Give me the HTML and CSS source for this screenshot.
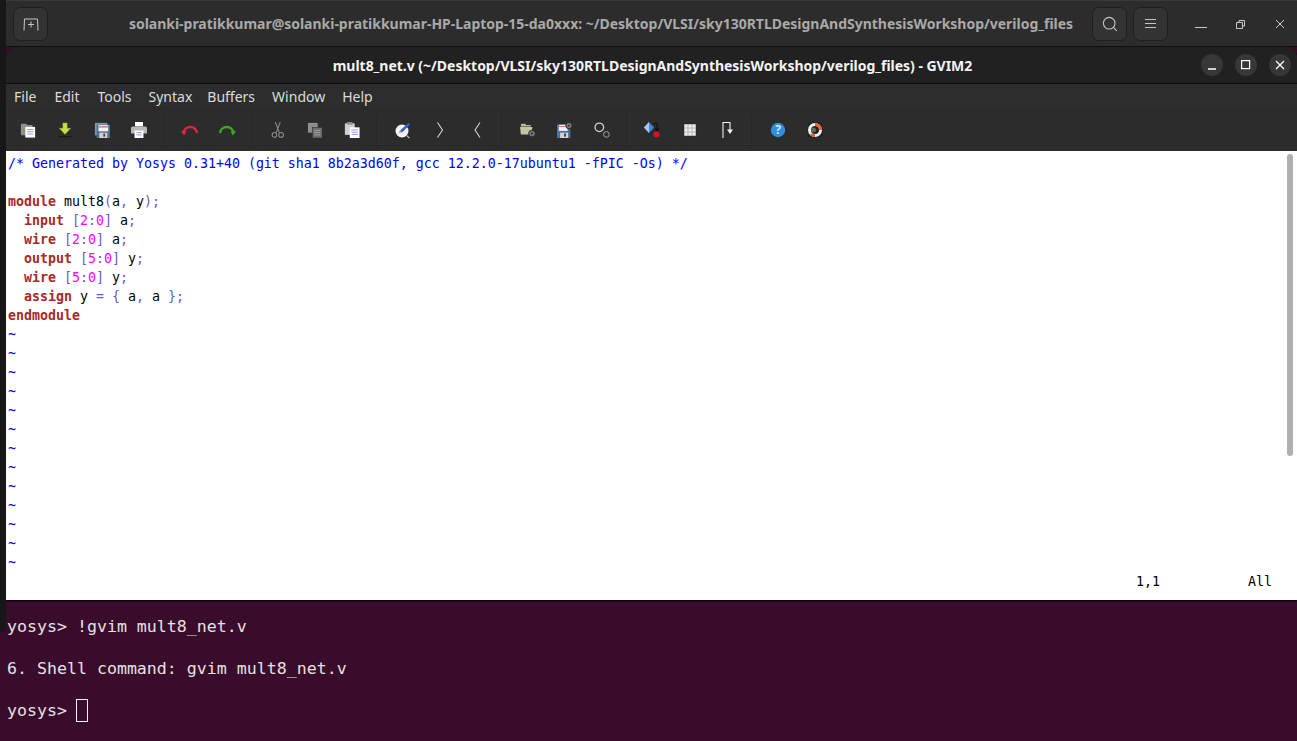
FILE: index.html
```html
<!DOCTYPE html>
<html lang="en">
<head>
<meta charset="utf-8">
<title>mult8_net.v - GVIM2</title>
<link rel="stylesheet" href="styles.css">
</head>
<body>
<div class="desktop">
  <div class="edge"></div>
  <header class="term-head">
    <button class="hbtn newtab" aria-label="New tab"><svg width="16" height="16" viewBox="0 0 16 16" fill="none" stroke="#c8c8c8" stroke-width="1"><path d="M1 14.5 L1.5 3 H14.5 L15 14.5 M8 5.5 V11.5 M5 8.5 H11"/></svg></button>
    <div class="term-title">solanki-pratikkumar@solanki-pratikkumar-HP-Laptop-15-da0xxx: ~/Desktop/VLSI/sky130RTLDesignAndSynthesisWorkshop/verilog_files</div>
    <button class="hbtn" aria-label="Search"><svg width="16" height="16" viewBox="0 0 16 16" fill="none" stroke="#c4c4c4" stroke-width="1.1"><circle cx="7.2" cy="7.2" r="5.8"/><path d="M11.4 11.4 L14.8 14.8"/></svg></button>
    <button class="hbtn menu-btn" aria-label="Menu"><svg width="12" height="10" viewBox="0 0 12 10" stroke="#c4c4c4" stroke-width="1"><path d="M0 .5H11M0 4.5H11M0 8.5H11"/></svg></button>
    <div class="wctl">
      <svg width="12" height="10" viewBox="0 0 12 10" stroke="#c8c8c8" stroke-width="1"><path d="M0 8.5 H12"/></svg>
      <svg width="10" height="10" viewBox="0 0 10 10" fill="none" stroke="#c8c8c8" stroke-width="1"><path d="M.5 3.5 H6.5 V9.5 H.5 Z M3 3 V1.5 H8.5 V7 H7"/></svg>
      <svg width="10" height="10" viewBox="0 0 10 10" stroke="#c8c8c8" stroke-width="1"><path d="M1 1 L9 9 M9 1 L1 9"/></svg>
    </div>
  </header>

  <section class="gvim">
    <div class="g-title">
      <div class="g-title-text">mult8_net.v (~/Desktop/VLSI/sky130RTLDesignAndSynthesisWorkshop/verilog_files) - GVIM2</div>
      <div class="g-ctl">
        <span class="round"><svg width="10" height="10" viewBox="0 0 10 10" stroke="#fff" stroke-width="1.3"><path d="M1 9 H9"/></svg></span>
        <span class="round"><svg width="10" height="10" viewBox="0 0 10 10" fill="none" stroke="#fff" stroke-width="1.2"><rect x=".6" y=".6" width="8" height="8"/></svg></span>
        <span class="round"><svg width="10" height="10" viewBox="0 0 10 10" stroke="#fff" stroke-width="1.3"><path d="M1 1 L9 9 M9 1 L1 9"/></svg></span>
      </div>
    </div>
    <nav class="menubar">
      <span>File</span><span>Edit</span><span>Tools</span><span>Syntax</span><span>Buffers</span><span>Window</span><span>Help</span>
    </nav>
    <div class="toolbar">
      <span class="tool"><svg width="16" height="16" viewBox="0 0 18 18"><path d="M1 3 Q1 2 2 2 H7 L8 3.500 H14 V15 H2 Q1 15 1 14Z" fill="#8f8f8f"/><rect x="6" y="5.500" width="11" height="12" fill="#fff"/><path d="M8 8.500H15M8 11H15M8 13.500H15" stroke="#8a8ad8"/></svg></span>
      <span class="tool"><svg width="16" height="16" viewBox="0 0 18 18"><path d="M6.500 1H11.500V7H15.500L9 14 2.500 7H6.500Z" fill="#c4e04a" stroke="#7f9a20" stroke-width=".5"/><path d="M2 16.500H16" stroke="#111" stroke-width="1"/></svg></span>
      <span class="tool"><svg width="16" height="16" viewBox="0 0 18 18"><rect x="1" y="1" width="14" height="14" fill="#7a9ab2"/><rect x="3" y="3" width="15" height="15" fill="#4d6f8c"/><rect x="5" y="3.500" width="11" height="7" fill="#f2f2f2"/><path d="M5 5.500H16" stroke="#e06060" stroke-width="1.200"/><rect x="6" y="12" width="9" height="6" fill="#d0d0d0"/><rect x="10.500" y="13" width="2" height="3.500" fill="#444"/></svg></span>
      <span class="tool"><svg width="16" height="16" viewBox="0 0 18 18"><rect x="4.500" y="0" width="9" height="5" fill="#fff"/><path d="M0 7 Q0 5 2 5 H16 Q18 5 18 7 V13 H0Z" fill="#b8b8b8"/><rect x="4" y="9.500" width="10" height="8.500" fill="#fff"/><path d="M6 12H12M6 14.500H12" stroke="#8a8ad8"/></svg></span>
      <span class="sep"></span>
      <span class="tool"><svg width="18" height="18" viewBox="0 0 18 18" fill="none"><path d="M2.500 12 A6.800 6.800 0 0 1 16 12" stroke="#e0263f" stroke-width="2.400"/><path d="M0 10 L5.500 10.500 L3 14.500 Z" fill="#e0263f"/></svg></span>
      <span class="tool"><svg width="18" height="18" viewBox="0 0 18 18" fill="none"><path d="M2 12 A6.800 6.800 0 0 1 15.500 12" stroke="#3ca81e" stroke-width="2.400"/><path d="M18 10 L12.500 10.500 L15 14.500 Z" fill="#3ca81e"/></svg></span>
      <span class="sep"></span>
      <span class="tool"><svg width="16" height="16" viewBox="0 0 18 18" fill="none" stroke="#8a8a8a" stroke-width="1.200"><path d="M6 0 L10.500 12 M11.500 0 L7 12"/><circle cx="5" cy="14.500" r="2.600"/><circle cx="12.500" cy="14.500" r="2.600"/></svg></span>
      <span class="tool"><svg width="16" height="16" viewBox="0 0 18 18"><rect x="1" y="1" width="11" height="11" fill="#8d8d8d"/><rect x="6" y="6" width="11" height="12" fill="#6e6e6e" stroke="#2a2a2a" stroke-width=".6"/><path d="M8 9.500H15M8 12H15M8 14.500H15" stroke="#a5a5a5"/></svg></span>
      <span class="tool"><svg width="16" height="16" viewBox="0 0 18 18"><rect x="1" y="1.500" width="11" height="13" fill="#d0d0d0"/><rect x="3.500" y="0" width="6" height="3" fill="#909090"/><rect x="6.500" y="6" width="11" height="12" fill="#fff"/><path d="M8.500 9H15.500M8.500 11.500H15.500M8.500 14H15.500" stroke="#8a8ad8"/></svg></span>
      <span class="sep"></span>
      <span class="tool"><svg width="18" height="18" viewBox="0 0 18 18"><circle cx="8" cy="10" r="6.500" fill="#f4f4f4"/><path d="M14.500 2 L16 3.500 L8.500 11 L6 11.500 L6.500 9Z" fill="#2f63d8"/><path d="M5 12 L7 9" stroke="#e89a58" stroke-width="1.200"/><path d="M12.500 14.500 L15.500 17" stroke="#bbb" stroke-width="1.200"/></svg></span>
      <span class="tool"><svg width="18" height="18" viewBox="0 0 18 18" fill="none" stroke="#d4d4d4" stroke-width="1.100"><path d="M6.500 1.500 L11.500 9 L6.500 16.500"/></svg></span>
      <span class="tool"><svg width="18" height="18" viewBox="0 0 18 18" fill="none" stroke="#d4d4d4" stroke-width="1.100"><path d="M12 1.500 L7 9 L12 16.500"/></svg></span>
      <span class="sep"></span>
      <span class="tool"><svg width="16" height="16" viewBox="0 0 18 18"><path d="M1 3 Q1 2 2 2 H6 L7 3.500 H12 V5 H1Z" fill="#b9bb98"/><path d="M0 5.500 H14 L13 14 H1Z" fill="#c3c6a2"/><circle cx="13.500" cy="13" r="3.800" fill="#777" stroke="#222" stroke-width="1"/><circle cx="13.500" cy="13" r="1.200" fill="#222"/></svg></span>
      <span class="tool"><svg width="16" height="16" viewBox="0 0 18 18"><rect x="0" y="3" width="15" height="15" fill="#4d7299"/><rect x="2" y="3" width="10" height="7" fill="#f2f2f2"/><path d="M2 5H12" stroke="#d86060"/><rect x="3.500" y="12" width="9" height="6" fill="#d4d4d4"/><rect x="8" y="13" width="2" height="3.500" fill="#333"/><circle cx="13.500" cy="4" r="3.600" fill="#777" stroke="#222"/><circle cx="13.500" cy="4" r="1" fill="#222"/></svg></span>
      <span class="tool"><svg width="16" height="16" viewBox="0 0 18 18" fill="none" stroke="#cfcfc0" stroke-width="1.500"><circle cx="6" cy="6" r="4.800"/><circle cx="14" cy="14" r="3.200" stroke="#a8a8a8" stroke-width="1.100"/></svg></span>
      <span class="sep"></span>
      <span class="tool"><svg width="18" height="18" viewBox="0 0 18 18"><path d="M5 1 L10 6.500 L5 12 L0 6.500Z" fill="#4a86d0"/><path d="M5 1 L5 12 L0 6.500Z" fill="#a9c8ec"/><path d="M9 2.500H13V8" fill="none" stroke="#111" stroke-width="1.200"/><path d="M10.500 7.500H15.500L13 10.500Z" fill="#111"/><circle cx="12.500" cy="13.500" r="3" fill="#e01020"/></svg></span>
      <span class="tool"><svg width="18" height="18" viewBox="0 0 18 18"><rect x="3" y="3" width="12" height="12" fill="#ececec" stroke="#222" stroke-width=".5"/><path d="M3 7H15M3 11H15M7 3V15M11 3V15" stroke="#a8a8a8" stroke-width=".8"/></svg></span>
      <span class="tool"><svg width="18" height="18" viewBox="0 0 18 18" fill="none"><path d="M5 17 V1.500 H12 V9" stroke="#f2f2f2" stroke-width="1.100"/><path d="M9 8.500H15L12 13Z" fill="#f2f2f2"/></svg></span>
      <span class="sep"></span>
      <span class="tool"><svg width="18" height="18" viewBox="0 0 18 18"><circle cx="9" cy="9" r="7.200" fill="#2f8fdc"/><text x="9" y="13" class="help-q">?</text></svg></span>
      <span class="tool"><svg width="18" height="18" viewBox="0 0 18 18"><rect x="1.500" y="1.500" width="15" height="15" rx="3" fill="#222"/><circle cx="9" cy="9" r="5.500" fill="none" stroke="#f2f2f2" stroke-width="3"/><path d="M9 3.500 A5.500 5.500 0 0 1 14.500 9 M9 14.500 A5.500 5.500 0 0 1 5 13" fill="none" stroke="#e8602c" stroke-width="3"/><circle cx="7.500" cy="9" r="2.500" fill="#666"/></svg></span>
    </div>
    <div class="editor">
      <div class="code">
<div class="ln c">/* Generated by Yosys 0.31+40 (git sha1 8b2a3d60f, gcc 12.2.0-17ubuntu1 -fPIC -Os) */</div>
<div class="ln">&nbsp;</div>
<div class="ln"><b>module</b> mult8<i>(</i>a<i>,</i> y<i>);</i></div>
<div class="ln">  <b>input</b> <i>[</i><u>2</u><i>:</i><u>0</u><i>]</i> a<i>;</i></div>
<div class="ln">  <b>wire</b> <i>[</i><u>2</u><i>:</i><u>0</u><i>]</i> a<i>;</i></div>
<div class="ln">  <b>output</b> <i>[</i><u>5</u><i>:</i><u>0</u><i>]</i> y<i>;</i></div>
<div class="ln">  <b>wire</b> <i>[</i><u>5</u><i>:</i><u>0</u><i>]</i> y<i>;</i></div>
<div class="ln">  <b>assign</b> y <i>=</i> <i>{</i> a<i>,</i> a <i>};</i></div>
<div class="ln"><b>endmodule</b></div>
<div class="ln t">~</div><div class="ln t">~</div><div class="ln t">~</div><div class="ln t">~</div><div class="ln t">~</div><div class="ln t">~</div><div class="ln t">~</div><div class="ln t">~</div><div class="ln t">~</div><div class="ln t">~</div><div class="ln t">~</div><div class="ln t">~</div><div class="ln t">~</div>
<div class="ln status"><span class="pos">1,1</span><span>All</span></div>
      </div>
      <div class="scroll"></div>
    </div>
  </section>

  <main class="term">
    <div class="tl">yosys&gt; !gvim mult8_net.v</div>
    <div class="tl">&nbsp;</div>
    <div class="tl">6. Shell command: gvim mult8_net.v</div>
    <div class="tl">&nbsp;</div>
    <div class="tl prompt">yosys&gt; <span class="cursor"></span></div>
  </main>
</div>
</body>
</html>
```
FILE: styles.css
```css
* { box-sizing: border-box; }
html, body { margin: 0; padding: 0; height: 100%; overflow: hidden; background: #380c2a; }
.desktop { position: relative; width: 1297px; height: 741px; display: flex; flex-direction: column; background: #380c2a; }
.edge { position: absolute; left: 0; top: 0; width: 6px; height: 633px; background: #171717; border-bottom-right-radius: 6px; }
.term-head { flex: none; height: 47px; margin-left: 6px; display: flex; align-items: center; background: #2c2c2c; border-top: 1px solid #3a3a3a; border-bottom: 1px solid #111; padding-left: 7px; }
.hbtn { flex: none; width: 35px; height: 34px; margin: 0; padding: 0; display: flex; align-items: center; justify-content: center; background: #333; border: 1px solid #1f1f1f; border-radius: 7px; }
.menu-btn { margin-left: 6px; }
.term-title { flex: 1; text-align: center; font: 700 14px "Noto Sans", sans-serif; letter-spacing: -0.015px; color: #a9a9a9; white-space: nowrap; padding-left: 62px; }
.wctl { flex: none; display: flex; width: 129px; padding: 0 0 0 27px; gap: 29px; }
.gvim { flex: none; margin-left: 6px; height: 553px; display: flex; flex-direction: column; background: #2c2c2c; border-radius: 12px 12px 0 0; overflow: hidden; box-shadow: 0 1px 2px #000; }
.g-title { height: 37px; flex: none; display: flex; align-items: center; background: #212121; border-bottom: 1px solid #0c0c0c; position: relative; }
.g-title-text { flex: 1; text-align: center; font: 700 14px "Noto Sans", sans-serif; letter-spacing: -0.02px; color: #f4f4f4; white-space: nowrap; padding-left: 2px; }
.g-ctl { display: flex; gap: 12px; padding-right: 6px; position: absolute; right: 0; top: 7px; }
.round { width: 22px; height: 22px; border-radius: 50%; background: #373737; display: flex; align-items: center; justify-content: center; }
.menubar { height: 24px; flex: none; display: flex; align-items: center; gap: 17px; padding: 1px 0 0 8px; background: #2d2d2d; font: 400 14px "Noto Sans", sans-serif; color: #dcdcdc; }
.menubar span:nth-child(2) { margin-left: 1px; }
.menubar span:nth-child(3) { margin-left: 1px; }
.menubar span:nth-child(5) { margin-left: -2px; }
.toolbar { height: 43px; flex: none; display: flex; align-items: center; padding-left: 3px; background: #2c2c2c; border-top: 1px solid #292929; }
.tool { flex: none; width: 37px; height: 37px; display: flex; align-items: center; justify-content: center; }
.sep { flex: none; width: 14px; height: 35px; }
.sep::after { content: ""; display: block; width: 1px; height: 100%; margin-left: 6px; background: #272727; }
.help-q { font: 700 12px "Noto Sans", sans-serif; fill: #cfe6fa; text-anchor: middle; }
.editor { flex: 1; min-height: 0; display: flex; background: #fff; overflow: hidden; }
.code { flex: 1; padding: 3px 0 0 2px; font: 400 13.29px/19px "DejaVu Sans Mono", monospace; color: #000; }
.ln { height: 19px; white-space: pre; }
.ln b { font-weight: 700; color: #a52a2a; }
.ln i { font-style: normal; color: #6a5acd; }
.ln u { text-decoration: none; color: #ff00ff; }
.c { color: #0000ff; }
.t { color: #0000ff; }
.status { display: flex; justify-content: flex-end; padding-right: 15px; color: #000; }
.pos { width: 112px; }
.scroll { flex: none; width: 6px; height: 302px; margin: 3px 4px 0 0; background: #b0b0b0; border-radius: 3px; }
.term { flex: 1; padding: 16px 0 0 7px; font: 400 16.6px/21px "DejaVu Sans Mono", monospace; color: #e6e0e4; }
.tl { height: 21px; white-space: pre; }
.prompt { display: flex; align-items: center; }
.cursor { flex: none; width: 12px; height: 23px; margin-left: -1px; border: 1px solid #f4f4f4; }
```
